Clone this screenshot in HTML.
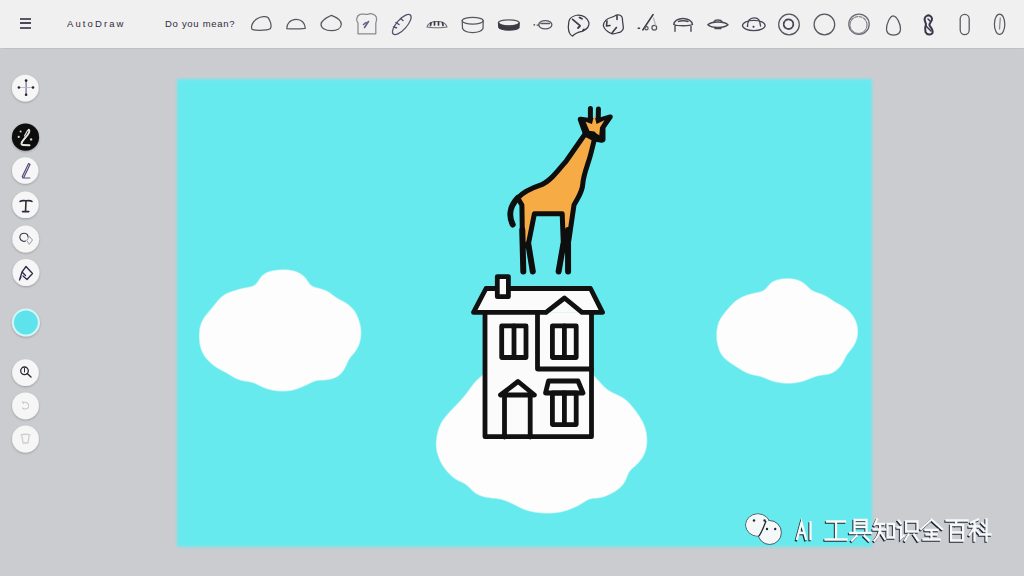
<!DOCTYPE html>
<html><head><meta charset="utf-8">
<style>
html,body{margin:0;padding:0;}
body{width:1024px;height:576px;overflow:hidden;background:#cbccd0;position:relative;font-family:"Liberation Sans",sans-serif;}
#top{position:absolute;left:0;top:0;width:1024px;height:48.3px;background:#f0f0f1;box-shadow:0 0.5px 1px rgba(0,0,0,0.06);}
.t{position:absolute;color:#2e2c3a;font-size:9.5px;font-weight:normal;letter-spacing:2.1px;white-space:nowrap;line-height:10px;}
#canvas{position:absolute;left:176.5px;top:78.5px;width:695.5px;height:468.5px;background:#67eaee;filter:blur(1.8px);}
.btn{position:absolute;width:27px;height:27px;border-radius:50%;background:#f7f7f8;box-shadow:0 1px 2px rgba(0,0,0,0.12);}
svg{position:absolute;left:0;top:0;}
</style></head>
<body>
<div id="top">
  <div style="position:absolute;left:20px;top:18px;width:11px;height:1.7px;background:#5a5866;"></div>
  <div style="position:absolute;left:20px;top:22px;width:11px;height:2.2px;background:#4a4858;"></div>
  <div style="position:absolute;left:20px;top:26.7px;width:11px;height:2px;background:#5a5866;"></div>
  <div class="t" style="left:67px;top:18.5px;">AutoDraw</div>
  <div class="t" style="left:165px;top:18.5px;letter-spacing:0.7px;">Do you mean?</div>
<svg width="1024" height="48" viewBox="0 0 1024 48" style="position:absolute;left:0;top:0;">
  <g fill="none" stroke="#58565e" stroke-width="1.25" stroke-linejoin="round" stroke-linecap="round">
    <!-- 1 blob -->
    <path d="M252,29.3 C250.5,26 253,21 257.5,18.5 C261,16.5 266,16 268,17.5 C270,20 272,25 270.5,28.5 C269,30 264,30.3 259,30.3 C255,30.3 253,30 252,29.3 Z"/>
    <!-- 2 dome -->
    <path d="M286.8,28.6 C286.5,24 290,19.5 296,19.3 C301.5,19.2 305,23 305.3,28.3 C300,28.8 292,28.9 286.8,28.6 Z"/>
    <!-- 3 shield -->
    <path d="M331.5,15.3 C336,17 341.5,20.5 341.3,24.5 C341,28.5 336.5,30.7 331,30.7 C326,30.7 321,28.5 321,24.3 C321,20.5 326,18 331.5,15.3 Z"/>
    <!-- 4 toast -->
    <path stroke="#8a8890" d="M358,33.8 L358,23 C356,21 356,16 360,14.3 C363,13.3 365,15 367.5,14.3 C371,13 375,14 376.3,17 C377,19.5 376.5,21.5 375.8,23 L375.8,33.8 Z"/>
    <path stroke="#6a5a8a" stroke-width="1.6" d="M364.5,27.5 L368.5,21.5 M363.5,24.5 L366,22.5"/>
    <!-- 5 baguette -->
    <ellipse cx="401.8" cy="24.5" rx="12.8" ry="5" transform="rotate(-48 401.8 24.5)" stroke="#55506a"/>
    <path stroke="#55506a" stroke-width="1.5" d="M393.5,27 L396.5,27.8 M396,22.5 L399,24.5 M400.5,18.5 L403,20.5"/>
    <!-- 6 -->
    <path stroke="#6a6a75" stroke-width="1.1" d="M427,27 C428,23.5 432,21.5 437,21.5 C442,21.5 446,23.5 447,27 C443,28 431,28 427,27 Z"/><path stroke="#3a3a45" stroke-width="1.7" d="M431,22.8 L430.5,25.5 M434.5,21.8 L434.5,25 M438.5,21.8 L438.5,25 M442.5,22.5 L443,25.5"/>
    <!-- 7 cylinder -->
    <ellipse cx="472.7" cy="20.7" rx="10.5" ry="3.3"/>
    <path d="M462.2,20.7 L462.5,28.5 C464,31.5 468,32.5 472.7,32.5 C477,32.5 481.5,31.5 483,28.5 L483.2,20.7"/>
    <!-- 8 dark puck -->
    <ellipse cx="508.8" cy="22.8" rx="10.4" ry="3"/>
    <path fill="#3c3a45" stroke="#3c3a45" d="M498.5,23 L498.8,27.5 C500,29.5 504,30 508.8,30 C513.5,30 517.5,29.5 519,27.5 L519.2,23 C518,25.5 513,26.2 508.8,26.2 C504.5,26.2 500,25.5 498.5,23 Z"/>
    <!-- 9 -->
    <circle cx="534.3" cy="24.8" r="0.9" fill="#555" stroke="none"/>
    <path d="M537,25 L539,25"/>
    <ellipse cx="545.3" cy="24.7" rx="6.6" ry="4.2"/>
    <path stroke-width="1.6" d="M541,23.5 L549.5,23.5"/>
    <!-- 10 broccoli -->
    <path stroke="#3e3c48" d="M568.9,21.3 C569.5,18 572,16 578,15 C583,15 587,17 588.9,22.5 C589.5,26 588,29 582,31.3 C578,32 575,33 572.6,36.2 C570,35 568.5,33 568.3,27 Z"/>
    <path stroke="#3e3c48" stroke-width="1.8" d="M572.6,19.4 L580,25.6 M579.5,17.5 L582,18.8 M580,26 L578,28 M583,30.5 L584,29.5"/>
    <!-- 11 -->
    <path stroke="#3e3c48" d="M603.3,25.6 C604,21 607,18.5 611,17.5 C613,17 615,16 616.5,15 C619,14.5 622,15 622.5,19 C622,21 623.5,24 623.3,28.7 C622,31.5 620,32.5 618.3,32.5 C616,33.5 614,34 611.5,33.7 C608,32 605,31 603.3,25.6 Z"/>
    <path stroke="#3e3c48" stroke-width="1.6" d="M612,33.1 L616.4,27.5 M607,21 L606.5,26 L610,25.5 M617,15.5 L617,19.5"/>
    <!-- 12 -->
    <path stroke="#3e3c48" stroke-width="1.5" d="M653.1,14.5 L642.8,30 M638.2,28.3 L639.5,28.3"/>
    <circle cx="646.5" cy="28.2" r="1.6"/>
    <circle cx="654.3" cy="27.8" r="2.4"/>
    <path stroke="#b8b8be" d="M653.5,18 L655.5,25"/>
    <!-- 13 ufo legs -->
    <path stroke="#4a4a55" stroke-width="1.4" d="M673.8,24.5 C674,21 678,18.5 683,18.5 C688,18.5 692,21 692.5,24.5 C690,26.2 677,26.2 673.8,24.5 Z M675,26 L675,31.2 M691,26 L691,31.2 M678.5,21.5 C680,20.5 686,20.5 688,21.5"/>
    <!-- 14 saucer -->
    <path stroke="#4a4a55" stroke-width="1.4" d="M707.8,24.8 C710,22.5 713,22 718,22 C723,22 726,22.5 728,24.8 C726,26.8 722,27.5 718,27.5 C714,27.5 710,26.8 707.8,24.8 Z M714,21.5 C715,19.5 721,19.5 722,21.5 M715,28.5 L721,28.5"/>
    <!-- 15 hat -->
    <ellipse cx="753.8" cy="25.5" rx="11.3" ry="5.1" stroke="#4a4558"/>
    <path stroke="#4a4558" stroke-width="1.3" d="M747.5,26 C747.5,21 749.5,18 754,17.8 C758.5,17.6 760,20 760.5,26"/>
    <circle cx="753.5" cy="26.8" r="1" fill="#3a3548" stroke="none"/>
    <circle cx="747.5" cy="26.3" r="0.8" fill="#3a3548" stroke="none"/>
    <!-- 16 donut -->
    <circle cx="789" cy="24.5" r="10.3"/>
    <circle cx="788.5" cy="24.2" r="4.8" stroke="#4a4558" stroke-width="1.8" stroke-dasharray="2.5 1.2"/>
    <!-- 17 circle -->
    <circle cx="824.4" cy="24.5" r="10.3"/>
    <!-- 18 double circle -->
    <circle cx="859" cy="24.2" r="10.2" stroke="#6a6572"/>
    <circle cx="858.5" cy="25" r="8.5" stroke="#8a8590" stroke-dasharray="3 1.5"/>
    <!-- 19 egg -->
    <path d="M893,15.8 C890,16 886.5,24 886.5,29 C886.5,33 889,35 893.5,35 C898,35 900.5,33 900.5,29 C900.5,24 897,16 893,15.8 Z"/>
    <!-- 20 peanut -->
    <path stroke="#3a3548" stroke-width="2" d="M926.5,16 C929,14.5 932,16 932,19 C932,22 929,22.5 929.5,25.5 C931,27.5 933.5,30 932.5,33 C931,35.5 927,35 925.5,32 C924.5,29 925,27 926,24 C924.5,21 924,17.5 926.5,16 Z"/>
    <path stroke="#3a3548" stroke-width="1.5" d="M926,26 L931,31 M928,19 L930,21"/>
    <!-- 21 capsule -->
    <rect x="960.2" y="14.3" width="9" height="20.3" rx="4.5"/>
    <!-- 22 oval -->
    <ellipse cx="999.6" cy="24.2" rx="5.2" ry="10.2"/>
    <path stroke="#8a8890" d="M1000.3,18 L999.5,29"/>
  </g>
</svg>
</div>
<div id="canvas"></div>
<svg width="60" height="480" viewBox="0 0 60 480" style="position:absolute;left:0;top:0;">
  <defs><filter id="sh" x="-30%" y="-30%" width="160%" height="160%"><feGaussianBlur in="SourceAlpha" stdDeviation="0.8"/><feOffset dy="0.5"/><feComponentTransfer><feFuncA type="linear" slope="0.25"/></feComponentTransfer><feMerge><feMergeNode/><feMergeNode in="SourceGraphic"/></feMerge></filter></defs>
  <g fill="#f6f6f7" filter="url(#sh)">
    <circle cx="25.3" cy="88.1" r="13.4"/>
    <circle cx="25.5" cy="137.2" r="13.6" fill="#0d0d0d"/>
    <circle cx="25.2" cy="170.5" r="13.2"/>
    <circle cx="25.5" cy="204.8" r="13.2"/>
    <circle cx="25.7" cy="239" r="13.4"/>
    <circle cx="26" cy="272.5" r="13.4"/>
    <circle cx="25.9" cy="322.6" r="14" fill="#d4f6f8"/>
    <circle cx="25.5" cy="372.6" r="13.3"/>
    <circle cx="25.5" cy="405.8" r="13.4"/>
    <circle cx="25.5" cy="439" r="13.4"/>
  </g>
  <circle cx="25.9" cy="322.6" r="12" fill="#5ee3ed"/>
  <g fill="none" stroke="#2a2830" stroke-linecap="round" stroke-linejoin="round">
    <!-- move -->
    <path stroke="#6a5a90" stroke-width="1.1" d="M26.1,81 L26.1,94.5"/>
    <path stroke="#b0b0b8" stroke-width="0.8" d="M19,87.5 L33,87.5"/>
    <g fill="#222" stroke="none"><circle cx="18.9" cy="87.5" r="1.3"/><circle cx="33" cy="87.5" r="1.3"/><circle cx="26.1" cy="80.6" r="1.3"/><circle cx="26.1" cy="94.7" r="1.3"/></g>
    <!-- autodraw white scribble -->
    <path stroke="#e8e6e0" stroke-width="2" d="M28.8,129.8 C30,131 29,133 27.5,135 C26,137 23.5,139.5 22,142 C21,144 21.5,145 23,145 L29.5,145.3"/>
    <path stroke="#e8e6e0" stroke-width="1.2" d="M27.5,130.5 L24.5,136"/>
    <g fill="#d8d6d0" stroke="none"><circle cx="20.6" cy="131.4" r="1"/><circle cx="18.7" cy="136.9" r="1.1"/><circle cx="31.1" cy="139.4" r="1.2"/></g>
    <!-- pencil -->
    <path stroke="#5a4a7a" stroke-width="1.2" d="M28.6,163.6 L22.3,176.5 L23,178 L29.8,178 M28.6,163.6 L30,164.6 L24,177"/>
    <!-- T -->
    <path stroke="#2e2a3a" stroke-width="1.6" d="M20,201.5 C21,200.5 24,200.6 26,200.8 C28,200.6 31,200.5 32,201.5 M26,201 L25.5,211.5 M22.5,211.6 L28.8,211.6"/>
    <!-- shape -->
    <path stroke="#3a3545" stroke-width="1.1" d="M25.5,241 C23.5,242 20,240.5 19.8,237.5 C19.7,234.5 22,233 24.5,233.2 C27,233.5 28,235 28,237"/>
    <path stroke="#9a98a0" stroke-width="1" d="M27,240 L29.5,236.5 L32.5,240 L29.5,244 Z"/>
    <!-- fill bucket -->
    <path stroke="#2e2a4a" stroke-width="1.3" d="M19.5,280 L22,272 L26,266.5 L32.5,273.5 L27,279.5 L23,276 M22,272 L25.5,275.5 M19.5,280 L21,277"/>
    <!-- zoom -->
    <circle cx="24.5" cy="370.8" r="3.8" stroke="#2a2830" stroke-width="1.3"/>
    <path stroke="#2a2830" stroke-width="1.4" d="M27.5,373.8 L31,377"/>
    <path stroke="#2a2830" stroke-width="1" d="M24.5,368.5 L24.5,372"/>
    <!-- undo -->
    <path stroke="#c8c8cc" stroke-width="1.1" d="M23,402.5 C27,401.5 29.5,404 28.5,407 C27.5,409.5 24,409.5 22.5,408 M22.5,401.5 L23.5,403.5"/>
    <!-- delete -->
    <path stroke="#cfcfd3" stroke-width="1.4" d="M21,435 C23,434 28,434 30,435 M22,436.5 L23,443 L28,443 L29,436.5"/>
  </g>
</svg>


<svg width="1024" height="576" viewBox="0 0 1024 576">
  <defs><filter id="goo" x="-20%" y="-20%" width="140%" height="140%"><feGaussianBlur in="SourceAlpha" stdDeviation="3.5"/><feComponentTransfer result="a"><feFuncA type="linear" slope="6" intercept="-2.5"/></feComponentTransfer><feFlood flood-color="#fdfdfd"/><feComposite operator="in" in2="a"/></filter></defs>
  <g fill="#fdfdfd" filter="url(#goo)">
    <path d="M256.8,284.3 C257.8,282.8 258.6,279.1 260.4,277.0 C262.3,274.9 264.5,272.9 267.7,271.7 C271.0,270.4 275.8,270.0 279.9,269.7 C283.9,269.5 288.4,269.5 292.0,270.2 C295.7,270.9 299.1,272.3 301.7,274.1 C304.4,275.8 306.4,278.6 307.8,280.6 C309.2,282.7 308.4,285.0 310.2,286.2 C312.1,287.4 315.7,287.0 318.7,287.9 C321.8,288.8 325.6,290.0 328.5,291.6 C331.3,293.2 332.9,295.8 335.7,297.6 C338.6,299.5 342.4,300.5 345.5,302.5 C348.5,304.5 351.7,307.0 354.0,309.8 C356.2,312.6 357.6,316.1 358.8,319.5 C360.0,323.0 361.0,326.6 361.2,330.4 C361.4,334.3 361.0,338.9 360.0,342.6 C359.0,346.2 357.0,349.7 355.2,352.3 C353.3,354.9 350.5,356.3 349.1,358.4 C347.7,360.4 347.7,362.2 346.7,364.4 C345.7,366.7 344.8,369.5 343.0,371.7 C341.2,374.0 338.6,376.4 335.7,377.8 C332.9,379.2 329.3,379.8 326.0,380.2 C322.8,380.6 319.5,379.4 316.3,380.2 C313.1,381.0 310.2,383.5 306.6,385.1 C302.9,386.7 298.5,388.9 294.4,389.9 C290.4,391.0 286.3,391.2 282.3,391.2 C278.3,391.2 273.8,390.8 270.2,389.9 C266.5,389.1 263.1,387.5 260.4,386.3 C257.8,385.1 256.8,383.5 254.4,382.7 C251.9,381.9 248.9,382.1 245.9,381.4 C242.8,380.8 239.0,380.2 236.2,379.0 C233.3,377.8 231.7,375.8 228.9,374.2 C226.0,372.5 222.4,371.3 219.1,369.3 C215.9,367.3 212.3,364.8 209.4,362.0 C206.6,359.2 203.8,355.9 202.1,352.3 C200.4,348.7 199.6,344.2 199.2,340.2 C198.8,336.1 199.0,331.7 199.7,328.0 C200.4,324.4 201.7,321.1 203.4,318.3 C205.0,315.5 207.6,313.2 209.4,311.0 C211.3,308.8 212.3,307.4 214.3,304.9 C216.3,302.5 218.7,298.7 221.6,296.4 C224.4,294.2 227.6,293.0 231.3,291.6 C234.9,290.2 239.6,288.8 243.4,287.9 C247.3,287.0 252.1,286.8 254.4,286.2 C256.6,285.6 255.8,285.8 256.8,284.3Z"/>
    <path d="M765.4,290.4 C767.3,289.1 766.8,286.3 768.5,284.6 C770.3,282.8 772.5,281.0 775.8,280.0 C779.1,279.0 784.3,278.3 788.3,278.3 C792.3,278.4 796.7,279.2 799.8,280.4 C802.9,281.6 805.2,283.9 807.1,285.6 C809.0,287.4 809.2,289.5 811.2,290.8 C813.3,292.1 816.8,292.3 819.6,293.3 C822.4,294.4 825.5,295.7 827.9,297.1 C830.3,298.5 831.6,300.1 834.2,301.7 C836.8,303.2 840.8,304.6 843.5,306.5 C846.3,308.3 848.8,310.3 850.8,312.7 C852.9,315.1 854.8,317.9 856.0,321.0 C857.3,324.2 858.1,328.0 858.1,331.5 C858.1,334.9 857.3,338.8 856.0,341.9 C854.8,345.0 852.4,348.1 850.8,350.2 C849.3,352.3 847.9,352.5 846.7,354.4 C845.5,356.3 844.9,359.2 843.5,361.7 C842.2,364.1 840.6,366.9 838.3,369.0 C836.1,371.0 833.1,373.1 830.0,374.2 C826.9,375.2 822.4,374.7 819.6,375.2 C816.8,375.7 816.1,376.2 813.3,377.3 C810.6,378.3 806.7,380.4 802.9,381.5 C799.1,382.5 794.6,383.4 790.4,383.5 C786.2,383.7 781.7,383.2 777.9,382.5 C774.1,381.8 770.3,380.4 767.5,379.4 C764.7,378.3 763.7,376.9 761.2,376.2 C758.8,375.6 755.7,375.9 752.9,375.2 C750.1,374.5 747.0,373.3 744.6,372.1 C742.2,370.9 740.8,369.5 738.3,367.9 C735.9,366.4 732.8,364.8 730.0,362.7 C727.2,360.6 723.8,358.4 721.7,355.4 C719.6,352.5 718.4,348.6 717.5,345.0 C716.6,341.4 716.3,337.4 716.5,333.5 C716.6,329.7 717.3,325.4 718.5,322.1 C719.8,318.8 721.8,316.4 723.8,313.8 C725.7,311.1 727.9,308.7 730.0,306.5 C732.1,304.2 733.5,302.1 736.2,300.2 C739.0,298.3 743.2,296.3 746.7,295.0 C750.1,293.7 754.0,293.3 757.1,292.5 C760.2,291.7 763.5,291.7 765.4,290.4Z"/>
    <path d="M473.6,383.6 C475.9,380.8 477.1,379.4 480.6,376.7 C484.0,373.9 488.4,369.7 494.4,366.9 C500.5,364.2 508.8,361.6 516.7,360.0 C524.5,358.4 532.9,357.2 541.7,357.2 C550.5,357.2 561.6,357.7 569.4,360.0 C577.3,362.3 584.0,367.6 588.9,371.1 C593.8,374.6 595.4,377.6 598.6,380.8 C601.9,384.1 603.9,387.5 608.3,390.6 C612.7,393.6 620.4,395.4 625.0,398.9 C629.6,402.4 632.9,407.0 636.1,411.4 C639.4,415.8 642.6,420.4 644.4,425.3 C646.3,430.1 647.2,435.7 647.2,440.6 C647.2,445.4 646.3,450.3 644.4,454.4 C642.6,458.6 638.7,462.8 636.1,465.6 C633.6,468.3 631.0,468.3 629.2,471.1 C627.3,473.9 627.1,479.0 625.0,482.2 C622.9,485.5 620.4,488.0 616.7,490.6 C613.0,493.1 607.4,496.1 602.8,497.5 C598.1,498.9 592.6,497.7 588.9,498.9 C585.2,500.0 584.7,502.4 580.6,504.4 C576.4,506.5 569.9,509.9 563.9,511.4 C557.9,512.9 550.9,513.6 544.4,513.3 C538.0,513.1 530.6,511.7 525.0,510.0 C519.4,508.3 515.3,504.9 511.1,503.1 C506.9,501.2 504.2,499.8 500.0,498.9 C495.8,498.0 490.3,498.4 486.1,497.5 C481.9,496.6 478.5,495.6 475.0,493.3 C471.5,491.0 468.5,485.9 465.3,483.6 C462.0,481.3 459.0,482.0 455.6,479.4 C452.1,476.9 447.5,472.5 444.4,468.3 C441.4,464.2 438.9,459.1 437.5,454.4 C436.1,449.8 435.6,445.6 436.1,440.6 C436.6,435.5 438.0,428.8 440.3,423.9 C442.6,419.0 447.0,414.9 450.0,411.4 C453.0,407.9 455.6,406.1 458.3,403.1 C461.1,400.0 464.1,396.6 466.7,393.3 C469.2,390.1 471.3,386.4 473.6,383.6Z"/>
  </g>
  <g stroke="#111" stroke-width="4.8" stroke-linejoin="round" stroke-linecap="round" fill="none">
    <!-- house -->
    <rect x="485" y="312.4" width="106.5" height="124.3" fill="#fbfbfb" stroke="none"/>
    <path d="M485,312.4 L485,436.7 L591.5,436.7 L591.5,312.4"/>
    <path d="M473.5,312.4 L486,288.5 L590.5,288.5 L602.5,312.4 Z" fill="#fbfbfb" stroke="none"/>
    <path d="M546,312.4 L473.5,312.4 L486,288.5 L590.5,288.5 L602.5,312.4 L582,312.4 L564.5,298 L546,312.4"/>
    <rect x="497.3" y="276.6" width="11.1" height="20.1" fill="#fbfbfb"/>
    <path d="M537.5,312.4 L537.5,369 L591.5,369"/>
    <rect x="501.7" y="325.9" width="24.3" height="31.6"/>
    <path d="M514,326 L514,357.5"/>
    <rect x="552.4" y="325.9" width="23.8" height="31.6"/>
    <path d="M564.4,326 L564.4,357.5"/>
    <path d="M504.5,437 L504.5,395 M530.2,437 L530.2,395 M500.5,395 L534.5,395 L518,381.5 Z"/>
    <path d="M548.5,381 L578,381 L583,393 L545.5,393 Z"/>
    <rect x="552.4" y="393" width="23.8" height="31.6"/>
    <path d="M564.4,393 L564.4,424.6"/>
  </g>
  <g stroke="#0e0e0e" stroke-width="5" stroke-linejoin="round" stroke-linecap="round" fill="none">
    <!-- giraffe -->
    <path stroke-width="6" d="M512.7,224.5 C509,217 509,207 517.7,198"/>
    <path fill="#f6ab45" d="M517.7,198 C523,192 530,188.5 541.7,184.6 C550,181 557,172 566.4,160.8 L586.5,132 L594.5,139 L590.5,155 C587.5,166 583.5,174 582.8,184 C582.2,193 577.5,198 574,205 L568,246 L563.4,246 L562.2,213.7 L534.4,213.7 L528,246 L522.5,246 L521.9,205 Z"/>
    <path stroke-width="6" d="M522.3,230 L523.3,271.5 M528.3,244 L532.8,271.5 M563.4,244 L558.6,271.5 M568,230 L568.1,271.5"/>
    <path stroke-width="5" d="M590.4,108.5 L590.4,121 M598.4,109 L598.2,121"/>
    <path stroke="none" fill="#0e0e0e" d="M583.5,136 L577.8,120 C577.5,117.5 579,116.5 581,116.8 L590,118 L598,118 L609.5,114.5 C612,114 613.5,115.5 612.5,118 L605.5,128 L605.5,140 C605,142.5 602.5,143 600,142.5 L594,141.5 Z"/>
    <path stroke="none" fill="#f6ab45" d="M585.5,121.8 L592,124 L594.3,114.5 L596.5,124 L604.5,120.3 L600,127.5 L599.2,136.5 L594.5,131.5 L589.5,131 Z"/>
    <path stroke-width="3" d="M590.5,132.5 L598.4,136.4"/>
</g>
</svg>
<svg width="1024" height="576" viewBox="0 0 1024 576" style="position:absolute;left:0;top:0;">
  <g fill="#f4f8f8" stroke="#3a4a58" stroke-width="0.9">
    <ellipse cx="757.9" cy="525" rx="12.3" ry="11.2"/>
    <ellipse cx="769.6" cy="532.5" rx="11.8" ry="12"/>
  </g>
  <g fill="#f4f8f8"><ellipse cx="757.9" cy="525" rx="11.5" ry="10.5"/></g>
  <path d="M759,536 C762,532 764,526 766,521" fill="none" stroke="#1e2c38" stroke-width="1.3"/>
  <g fill="#1e2c38"><circle cx="754" cy="520.5" r="1.2"/><circle cx="764.6" cy="520.5" r="1.2"/><circle cx="767" cy="529" r="1.2"/><circle cx="775.2" cy="529" r="1.2"/></g>
  <g fill="none" stroke="#1c2836" stroke-width="2.5" stroke-linecap="square"><path transform="translate(795.6,523.1)" d="M0.5,17 L5,0.5 L9.5,17 M2.3,11 H7.7 M14,0.5 V17"/><path transform="translate(824.1,520.1)" d="M2,2.5 H20 M11,2.5 V20 M0.5,20.5 H21.5"/><path transform="translate(848.6,520.1)" d="M5,1 H17 V12 M5,1 V12 M5,4.5 H17 M5,8 H17 M0.5,14 H21.5 M7,17 L2.5,21.5 M15,17 L19.5,21.5"/><path transform="translate(872.1,520.1)" d="M4,0.5 L1.5,6 M2.5,5 H11 M0.5,10.5 H12 M7,5 V11 C6,15 4,19 1.5,21.5 M7.5,13 L12,20 M14.5,5 H21 V18.5 H14.5 Z"/><path transform="translate(896.1,520.1)" d="M1.5,1.5 L4,4.5 M0.5,8.5 H4 V19.5 L6.5,17 M9,2.5 H20.5 V12.5 H9 Z M11.5,15.5 L8,21.5 M17,15.5 L21,21.5"/><path transform="translate(919.6,520.1)" d="M11,0.5 L0.5,10 M11,0.5 L21.5,10 M5,11 H17 M11,11 V20.5 M6,15.5 H16 M3,20.5 H19"/><path transform="translate(945.1,520.1)" d="M0.5,1.5 H21.5 M11,1.5 L9,6 M5,6 H17 V21.5 H5 Z M5,13.5 H17"/><path transform="translate(968.1,520.1)" d="M9,0.5 L2,3.5 M0.5,7.5 H10 M5.5,3 V21.5 M5.5,8.5 L0.5,16 M6,9.5 L10,14 M13,4 L15.5,6.5 M12.5,9.5 L15,12 M11,15.5 H21.5 M17.5,0.5 V21.5"/></g>
  <g fill="none" stroke="#f6f8fa" stroke-width="2.3" stroke-linecap="square"><path transform="translate(796.5,522.0)" d="M0.5,17 L5,0.5 L9.5,17 M2.3,11 H7.7 M14,0.5 V17"/><path transform="translate(825.0,519.0)" d="M2,2.5 H20 M11,2.5 V20 M0.5,20.5 H21.5"/><path transform="translate(849.5,519.0)" d="M5,1 H17 V12 M5,1 V12 M5,4.5 H17 M5,8 H17 M0.5,14 H21.5 M7,17 L2.5,21.5 M15,17 L19.5,21.5"/><path transform="translate(873.0,519.0)" d="M4,0.5 L1.5,6 M2.5,5 H11 M0.5,10.5 H12 M7,5 V11 C6,15 4,19 1.5,21.5 M7.5,13 L12,20 M14.5,5 H21 V18.5 H14.5 Z"/><path transform="translate(897.0,519.0)" d="M1.5,1.5 L4,4.5 M0.5,8.5 H4 V19.5 L6.5,17 M9,2.5 H20.5 V12.5 H9 Z M11.5,15.5 L8,21.5 M17,15.5 L21,21.5"/><path transform="translate(920.5,519.0)" d="M11,0.5 L0.5,10 M11,0.5 L21.5,10 M5,11 H17 M11,11 V20.5 M6,15.5 H16 M3,20.5 H19"/><path transform="translate(946.0,519.0)" d="M0.5,1.5 H21.5 M11,1.5 L9,6 M5,6 H17 V21.5 H5 Z M5,13.5 H17"/><path transform="translate(969.0,519.0)" d="M9,0.5 L2,3.5 M0.5,7.5 H10 M5.5,3 V21.5 M5.5,8.5 L0.5,16 M6,9.5 L10,14 M13,4 L15.5,6.5 M12.5,9.5 L15,12 M11,15.5 H21.5 M17.5,0.5 V21.5"/></g>
</svg>
</body></html>
